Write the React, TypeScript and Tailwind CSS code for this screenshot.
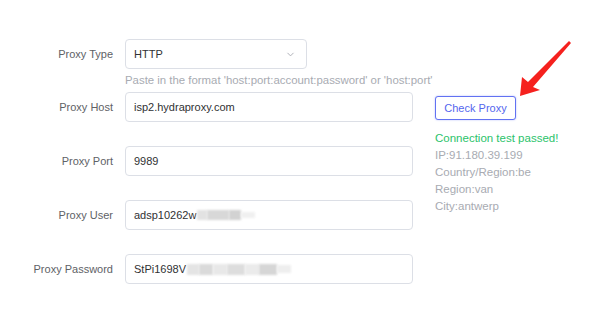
import { ChevronDown } from 'lucide-react';

const fields = [
    { label: 'Proxy Host', value: 'isp2.hydraproxy.com', blur: null },
    { label: 'Proxy Port', value: '9989', blur: null },
    { label: 'Proxy User', value: 'adsp10262w', blur: 'user' },
    { label: 'Proxy Password', value: 'StPi1698V', blur: 'pass' },
];

function Blur({ kind }: { kind: string }) {
    if (kind === 'user') {
        return (
            <div className="flex items-center ml-px">
                <div className="w-[10px] h-[10px] bg-[#e2e2e2] blur-[1px]" />
                <div className="w-[22px] h-[10px] bg-[#d8d8d8] blur-[1px]" />
                <div className="w-[12px] h-[10px] bg-[#d2d2d2] blur-[1px]" />
                <div className="w-[14px] h-[6px] bg-[#f0f0f0] blur-[1px]" />
            </div>
        );
    }
    return (
        <div className="flex items-center ml-px">
            <div className="w-[12px] h-[11px] bg-[#e4e4e4] blur-[1px]" />
            <div className="w-[14px] h-[11px] bg-[#dadada] blur-[1px]" />
            <div className="w-[14px] h-[11px] bg-[#e8e8e8] blur-[1px]" />
            <div className="w-[18px] h-[11px] bg-[#dddddd] blur-[1px]" />
            <div className="w-[14px] h-[11px] bg-[#ebebeb] blur-[1px]" />
            <div className="w-[18px] h-[11px] bg-[#d6d6d6] blur-[1px]" />
            <div className="w-[14px] h-[8px] bg-[#eeeeee] blur-[1px]" />
        </div>
    );
}

export default function App() {
    return (
        <div className="relative w-[604px] h-[311px] bg-white overflow-hidden" style={{ fontFamily: '"Liberation Sans", Arial, sans-serif' }}>
            <div className="flex pt-[39px]">
                <div className="flex flex-col w-[413px] shrink-0">
                    <div className="flex items-center">
                        <label className="w-[113px] text-right text-[11px] text-[#606266]">Proxy Type</label>
                        <div className="ml-[12px] w-[182px] h-[30px] border border-[#dcdfe6] rounded-[4px] flex items-center justify-between pl-[8px] pr-[10px]">
                            <span className="text-[11px] text-[#303133]">HTTP</span>
                            <ChevronDown size={11} className="text-[#a8abb2]" />
                        </div>
                    </div>
                    <div className="ml-[125px] mt-[3px] h-[20px] text-[11.4px] text-[#a8abb2] leading-[16px] whitespace-nowrap">
                        Paste in the format 'host:port:account:password' or 'host:port'
                    </div>
                    {fields.map((f, i) => (
                        <div key={f.label} className={`flex items-center ${i === 0 ? '' : 'mt-[24px]'}`}>
                            <label className="w-[113px] text-right text-[11px] text-[#606266]">{f.label}</label>
                            <div className="ml-[12px] w-[288px] h-[30px] border border-[#dcdfe6] rounded-[4px] flex items-center pl-[8px]">
                                <span className="text-[11px] text-[#303133]">{f.value}</span>
                                {f.blur && <Blur kind={f.blur} />}
                            </div>
                        </div>
                    ))}
                </div>
                <div className="ml-[22px] pt-[57px] flex flex-col">
                    <button className="w-[81px] h-[24px] border border-[#6272f2] rounded-[3px] text-[11px] text-[#5566ee] shadow-[0_0_2px_#b4bcfb] bg-white">
                        Check Proxy
                    </button>
                    <div className="mt-[10px] text-[11.5px] leading-[17px]">
                        <div className="text-[#2bc36b]">Connection test passed!</div>
                        <div className="text-[#a8abb2]">IP:91.180.39.199</div>
                        <div className="text-[#a8abb2]">Country/Region:be</div>
                        <div className="text-[#a8abb2]">Region:van</div>
                        <div className="text-[#a8abb2]">City:antwerp</div>
                    </div>
                </div>
            </div>
            <svg className="absolute left-[510px] top-[35px]" width="64" height="66" viewBox="0 0 64 66">
                <path d="M10 61 L12 42 L18 47 L59 6 L61 8 L23 52 L30 55 Z" fill="#f5211e" />
            </svg>
        </div>
    );
}
